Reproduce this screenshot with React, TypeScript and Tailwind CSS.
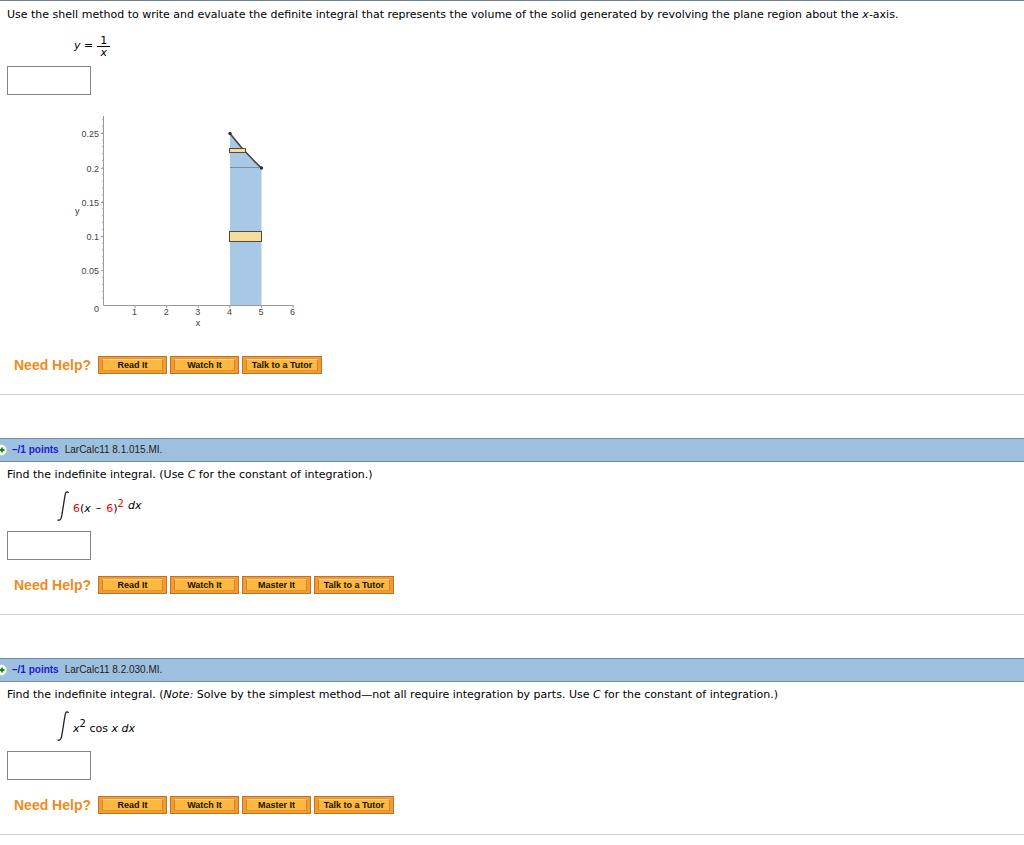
import type { ReactNode } from "react";

// ── Data ───────────────────────────────────────────────────────────────────

const Y_LABELS = [
  { text: "0.25", y: 28 },
  { text: "0.2", y: 63 },
  { text: "0.15", y: 97 },
  { text: "0.1", y: 131 },
  { text: "0.05", y: 165 },
];

const X_LABELS = [1, 2, 3, 4, 5, 6];

const MINOR_TICKS = Array.from({ length: 27 }, (_, i) => 200 - (i + 1) * 6.88);

// ── Page ───────────────────────────────────────────────────────────────────

export default function App() {
  return (
    <main className="bg-white font-['DejaVu_Sans',Verdana,sans-serif] text-[11px] leading-4 text-black">
      <section className="border-t border-[#6f8296] pt-[6px]">
        <div className="px-[7px]">
          <p>
            Use the shell method to write and evaluate the definite integral that
            represents the volume of the solid generated by revolving the plane
            region about the <i>x</i>-axis.
          </p>
          <div className="mt-[11px] flex h-6 items-center gap-1 pl-[67px]">
            <span>
              <i>y</i> =
            </span>
            <span className="flex flex-col items-center leading-[11px]">
              <span className="border-b border-black px-[3px]">1</span>
              <i>x</i>
            </span>
          </div>
          <AnswerBox label="Volume of the solid" />
          <RegionPlot />
        </div>
        <NeedHelp actions={["Read It", "Watch It"]} />
      </section>

      <Question code="LarCalc11 8.1.015.MI.">
        <p>
          Find the indefinite integral. (Use <i>C</i> for the constant of
          integration.)
        </p>
        <Integral>
          <span>
            <span className="text-[#ff0000]">6</span>(<i>x</i>
            <span className="px-[5px]">–</span>
            <span className="text-[#ff0000]">6</span>)<Squared red />
          </span>
          <i>dx</i>
        </Integral>
      </Question>

      <Question code="LarCalc11 8.2.030.MI.">
        <p>
          Find the indefinite integral. (<i>Note:</i> Solve by the simplest
          method—not all require integration by parts. Use <i>C</i> for the
          constant of integration.)
        </p>
        <Integral>
          <span>
            <i>x</i>
            <Squared /> cos <i>x</i> <i>dx</i>
          </span>
        </Integral>
      </Question>
    </main>
  );
}

// ── Question ───────────────────────────────────────────────────────────────

function Question({ code, children }: { code: string; children: ReactNode }) {
  return (
    <section className="mt-[43px]">
      <header className="flex h-6 items-center border-y border-[#6f8fa8] bg-[#9dc0de] font-['Liberation_Sans',Arial,sans-serif] text-[10px]">
        <PlusBadge />
        <h2 className="ml-1 font-bold text-[#1c1ccc]">–/1 points</h2>
        <span className="ml-[6px] text-[#222222]">{code}</span>
      </header>
      <div className="px-[7px] pt-[5px]">
        {children}
        <AnswerBox label={`Answer for ${code}`} />
      </div>
      <div className="pt-4">
        <NeedHelp actions={["Read It", "Watch It", "Master It"]} />
      </div>
    </section>
  );
}

function AnswerBox({ label }: { label: string }) {
  return (
    <input
      type="text"
      aria-label={label}
      className="mt-2 block h-[29px] w-[84px] border border-[#858585] bg-white px-1 outline-none"
    />
  );
}

function NeedHelp({ actions }: { actions: string[] }) {
  return (
    <div className="flex items-center gap-[3px] border-b border-[#d2d2d2] pb-5 pl-[14px] font-['Liberation_Sans',Arial,sans-serif]">
      <span className="mr-1 text-sm leading-[18px] font-bold text-[#ee8b1c]">
        Need Help?
      </span>
      {actions.map((action) => (
        <HelpButton key={action}>{action}</HelpButton>
      ))}
      <HelpButton wide>Talk to a Tutor</HelpButton>
    </div>
  );
}

function HelpButton({ wide, children }: { wide?: boolean; children: ReactNode }) {
  return (
    <button
      type="button"
      className={[
        "flex h-[18px] border border-[#bf7424] bg-[#f29a35] px-[3px] py-[2px] text-[9px] leading-3 font-bold text-[#1a1000]",
        wide ? "w-20" : "w-[69px]",
      ].join(" ")}
    >
      <span className="flex h-full w-full items-center justify-center border border-t-[#fcd48c] border-r-[#d98126] border-b-[#e8922c] border-l-[#d98126] bg-[#fbb941] whitespace-nowrap">
        {children}
      </span>
    </button>
  );
}

// ── Math ───────────────────────────────────────────────────────────────────

function Integral({ children }: { children: ReactNode }) {
  return (
    <div className="mt-2 mb-[10px] flex h-[30px] items-center gap-1 pl-[50px]">
      <svg
        width="12"
        height="30"
        viewBox="0 0 12 30"
        fill="none"
        stroke="#222"
        aria-hidden="true"
      >
        <path
          d="M11.5 2C10.6 .4 8.9 .5 8.3 3.2C7.3 8 5.7 20 4.5 25.8C3.8 29.3 2 29.9 .5 28.7"
          strokeWidth="1.3"
        />
      </svg>
      {children}
    </div>
  );
}

function Squared({ red }: { red?: boolean }) {
  return (
    <sup
      className={[
        "static align-super text-[10px] leading-4",
        red ? "text-[#ff0000]" : "",
      ].join(" ")}
    >
      2
    </sup>
  );
}

// ── Drawings ───────────────────────────────────────────────────────────────

function PlusBadge() {
  return (
    <svg width="8" height="14" viewBox="0 0 8 14" aria-hidden="true">
      <circle cx="1.5" cy="7" r="5.5" fill="#fff" stroke="#b7c9c0" />
      <path d="M-1 7H4.5M2 4.5V9.5" stroke="#138a13" strokeWidth="1.8" />
    </svg>
  );
}

function RegionPlot() {
  return (
    <svg
      width="240"
      height="230"
      viewBox="0 0 240 230"
      role="img"
      aria-label="Region under y = 1/x between x = 4 and x = 5"
      className="mt-[10px] mb-[21px] ml-[53px] block font-['Liberation_Sans',Arial,sans-serif]"
    >
      <path d="M170 28.5Q184 47 201.5 63V200.5H170Z" fill="#a8c8e6" />
      <path d="M170 62.5H201" stroke="#7890a6" />
      <path d="M170 28.5Q184 47 201.5 63" fill="none" stroke="#444" strokeWidth="1.6" />
      <rect x="169.5" y="43.5" width="16" height="4" fill="#f3dc9c" stroke="#554a38" />
      <rect x="169.5" y="126.5" width="32" height="10" fill="#f3dc9c" stroke="#554a38" />
      <circle cx="170" cy="28.5" r="1.7" fill="#333" />
      <circle cx="201.5" cy="63" r="1.7" fill="#333" />

      <path d="M43.5 11V200.5H233" fill="none" stroke="#9a9a9a" />
      {MINOR_TICKS.map((y) => (
        <path key={y} d={`M42 ${y}H43.5`} stroke="#aaa" />
      ))}
      {Y_LABELS.map(({ text, y }) => (
        <g key={text}>
          <path d={`M41 ${y + 0.5}H43.5`} stroke="#999" />
          <text x="39" y={y + 4} textAnchor="end" fontSize="9" fill="#444">
            {text}
          </text>
        </g>
      ))}
      <text x="39" y="207" textAnchor="end" fontSize="9" fill="#444">
        0
      </text>
      {X_LABELS.map((n) => (
        <g key={n}>
          <path d={`M${43.5 + n * 31.6} 200V203`} stroke="#999" />
          <text
            x={43 + n * 31.6}
            y="210"
            textAnchor="middle"
            fontSize="9"
            fill="#444"
          >
            {n}
          </text>
        </g>
      ))}
      <text x="15" y="109" fontSize="9" fill="#333">
        y
      </text>
      <text x="138" y="221" textAnchor="middle" fontSize="9" fill="#333">
        x
      </text>
    </svg>
  );
}
